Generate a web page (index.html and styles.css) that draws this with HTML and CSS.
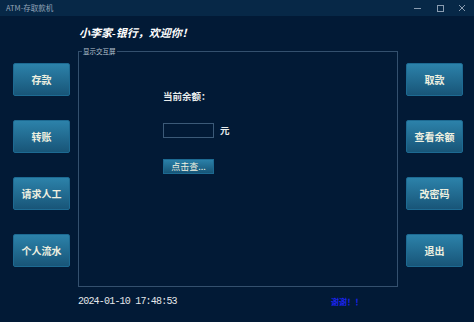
FILE: index.html
```html
<!DOCTYPE html>
<html lang="zh">
<head>
<meta charset="utf-8">
<title>ATM-存取款机</title>
<link rel="stylesheet" href="styles.css">
</head>
<body>
<div class="window">
  <div class="titlebar">
    <span class="title">ATM-存取款机</span>
    <div class="controls">
      <svg class="ctl" width="12" height="12" viewBox="0 0 12 12"><path d="M2 6.5h7" stroke="#8a9cb0" stroke-width="1"/></svg>
      <svg class="ctl" width="12" height="12" viewBox="0 0 12 12"><rect x="3.5" y="3.5" width="6" height="6" fill="none" stroke="#8a9cb0" stroke-width="1"/></svg>
      <svg class="ctl" width="12" height="12" viewBox="0 0 12 12"><path d="M3 3l6 6M9 3l-6 6" stroke="#8a9cb0" stroke-width="1"/></svg>
    </div>
  </div>
  <div class="main">
    <div class="side">
      <button class="btn">存款</button>
      <button class="btn">转账</button>
      <button class="btn">请求人工</button>
      <button class="btn">个人流水</button>
    </div>
    <div class="center">
      <div class="welcome">小李家-银行，欢迎你！</div>
      <div class="group">
        <span class="legend">显示交互屏</span>
        <div class="content">
          <div class="balance">当前余额：</div>
          <div class="amount"><span class="field"></span><span class="unit">元</span></div>
          <button class="small-btn">点击查...</button>
        </div>
      </div>
      <div class="status">
        <span class="clock">2024-01-10 17:48:53</span>
        <span class="thanks">谢谢！！</span>
      </div>
    </div>
    <div class="side">
      <button class="btn">取款</button>
      <button class="btn">查看余额</button>
      <button class="btn">改密码</button>
      <button class="btn">退出</button>
    </div>
  </div>
</div>
</body>
</html>
```
FILE: styles.css
```css
* { box-sizing: border-box; }
html, body { margin: 0; padding: 0; }
body {
  width: 474px;
  height: 322px;
  background: #021a36;
  font-family: "Noto Sans CJK SC", "Noto Sans", sans-serif;
  overflow: hidden;
}
.window { width: 474px; height: 322px; display: flex; flex-direction: column; }
.titlebar {
  height: 16px;
  background: #072847;
  display: flex;
  align-items: center;
  justify-content: space-between;
  padding-left: 6px;
  padding-right: 6px;
}
.title { font-size: 7.5px; color: #95a6b8; line-height: 1; }
.controls { display: flex; gap: 10px; }
.ctl { display: block; }
.main {
  display: grid;
  grid-template-columns: 57px 320px 57px;
  column-gap: 8px;
  padding-left: 13px;
}
.side {
  display: flex;
  flex-direction: column;
  gap: 24px;
  padding-top: 47px;
}
.btn {
  width: 57px;
  height: 33px;
  border: 1px solid #1d6a92;
  border-radius: 2px;
  background: linear-gradient(#2c82aa, #185578);
  color: #eef0e0;
  font-family: "Noto Sans CJK SC", sans-serif;
  font-weight: bold;
  font-size: 10px;
  padding: 0;
  margin: 0;
}
.center { display: flex; flex-direction: column; }
.welcome {
  height: 35px;
  padding-top: 8px;
  padding-left: 1px;
  color: #ffffff;
  font-family: "Liberation Serif", "Noto Sans CJK SC", serif;
  font-size: 11px;
  font-weight: bold;
  font-style: italic;
  line-height: 18px;
}
.group {
  position: relative;
  height: 236px;
  border: 1px solid #34506e;
}
.legend {
  position: absolute;
  left: 3px;
  top: -5px;
  padding: 0 1px;
  background: #021a36;
  color: #b8c4d0;
  font-size: 6.5px;
  line-height: 9px;
}
.content {
  padding-left: 84px;
  padding-top: 36px;
  display: flex;
  flex-direction: column;
  align-items: flex-start;
}
.balance {
  color: #e8ecec;
  font-size: 9.5px;
  font-weight: bold;
  line-height: 16px;
}
.amount {
  margin-top: 19px;
  display: flex;
  align-items: center;
  gap: 6px;
}
.field {
  width: 51px;
  height: 15px;
  border: 1px solid #3c5a78;
  background: #021a36;
}
.unit { color: #e8ecec; font-size: 9.5px; font-weight: bold; line-height: 15px; }
.small-btn {
  margin-top: 21px;
  width: 51px;
  height: 15px;
  border: 1px solid #1d6a92;
  background: linear-gradient(#2a80a8, #175577);
  color: #eef0e0;
  font-family: "Noto Sans CJK SC", sans-serif;
  font-size: 9px;
  line-height: 13px;
  padding: 0;
}
.status {
  display: flex;
  justify-content: space-between;
  align-items: center;
  padding-top: 8px;
  padding-right: 35px;
}
.clock {
  color: #e4e7ea;
  font-family: "Liberation Mono", monospace;
  font-size: 10px;
  letter-spacing: -0.8px;
  line-height: 14px;
}
.thanks {
  color: #1c24f0;
  font-size: 8px;
  font-weight: bold;
  line-height: 12px;
}
```
